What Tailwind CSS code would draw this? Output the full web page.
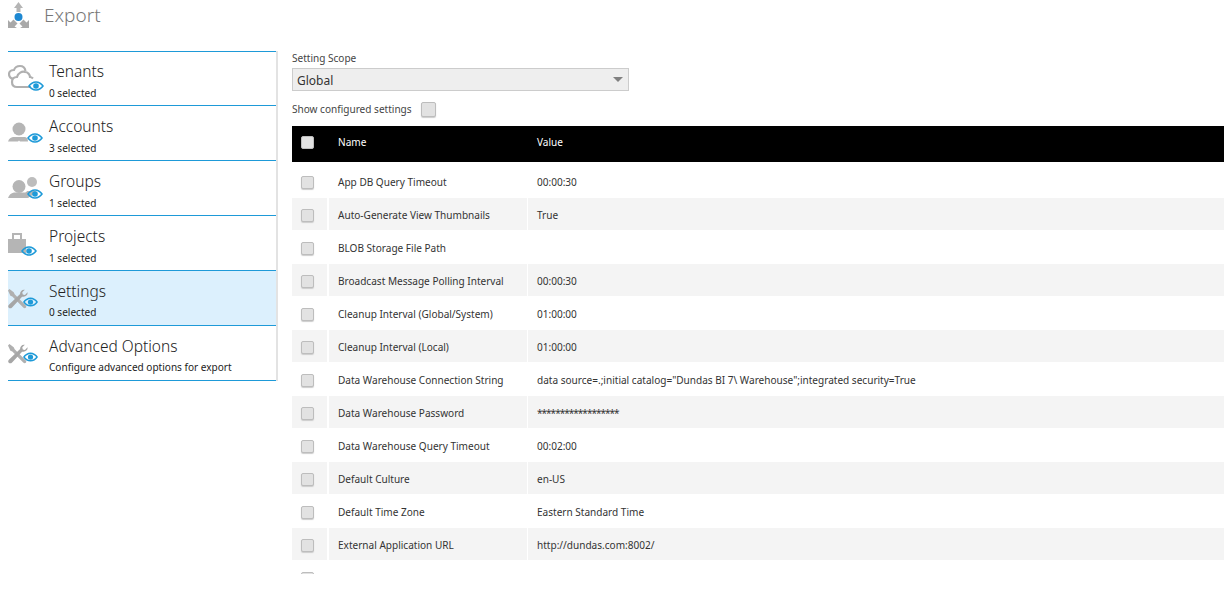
<!DOCTYPE html>
<html lang="en">
<head>
  <meta charset="UTF-8">
  <title>Export</title>
  <script src="https://cdn.jsdelivr.net/npm/@tailwindcss/browser@4"></script>
</head>
<body class="bg-white overflow-hidden font-['Noto_Sans',sans-serif]">
  <svg class="hidden">
    <defs>
      <symbol id="eye" viewBox="0 0 16 10">
        <path fill-rule="evenodd" fill="#1e9ad8" d="M0 5C2 1.800 5 .2 8 .2s6 1.600 8 4.800c-2 3.200-5 4.800-8 4.800S2 8.200 0 5zm2 0c1.500 1.900 3.600 3.300 6 3.300s4.500-1.400 6-3.300c-1.500-1.900-3.600-3.300-6-3.300S3.500 3.100 2 5z"/>
        <circle cx="8" cy="5" r="2.800" fill="#1e9ad8"/>
      </symbol>
      <symbol id="tools" viewBox="0 0 21 21">
        <path fill="#b0b0b0" d="M0 1.500 1.500 0 6 3.500l1 2 11.500 11.500c.9.900.9 2 .2 2.700-.7.700-1.800.7-2.700-.2L4.500 8l-2-1z"/>
        <path fill="#a6a6a6" d="M20.500 3.500 17.800 6.200 15.500 5.800 15 3.500 17.700.8c-2.800-.6-5.200 1.500-5 4.500L1.200 16.200c-1.300 1.200-1.300 2.600-.4 3.500.9.900 2.400.9 3.500-.3L14.800 8.200c3 .2 6.200-1.600 5.700-4.700z"/>
      </symbol>
    </defs>
  </svg>

  <div class="flex items-center h-[32px] pl-2">
    <svg class="w-[21px] h-[28px] mt-[-2px]" viewBox="0 0 21 28">
      <path fill="#b5b5b5" d="M10.500 1 15 7h-2.500v4h-4V7H6z"/>
      <path fill="#a9a9a9" d="M0 27V19l2.500 2.500 3-3 4 4-3 3L9 27z"/>
      <path fill="#a9a9a9" d="M21 27V19l-2.500 2.500-3-3-4 4 3 3L12 27z"/>
      <circle cx="10.500" cy="16" r="4" fill="#1e88d2"/>
    </svg>
    <span class="ml-[15px] mt-[-2px] text-[19px] font-light text-[#777777] leading-none">Export</span>
  </div>

  <div class="flex mt-[19px]">
    <div class="w-[270px] ml-2 border-r-2 border-[#e3e3e3] self-start text-[#222222]">
      <div class="h-[54px] border-t border-[#1e9ad8] flex">
        <svg class="w-[37px] h-[30px] mt-[12px] shrink-0" viewBox="0 0 37 30">
          <path fill="none" stroke="#b0b0b0" stroke-width="2.200" d="M5 15C2 14 1 12 1 10 1 7 4 6 6 6 7 3 10 2 12 2c3 0 5 2 5.500 5"/>
          <path fill="none" stroke="#b0b0b0" stroke-width="2.200" d="M23 23H9c-4 0-5-3-5-5 0-3 2-5 5-5 1-4 5-6 8-5 3 0 5 3 5 5 1 0 2 .5 3 1.500"/>
          <use href="#eye" x="20" y="17" width="16" height="10"/>
        </svg>
        <div class="ml-[4px]">
          <div class="text-[15.500px] font-light leading-[20px] mt-[9px]">Tenants</div>
          <div class="text-[10.050px] leading-[14px] mt-[5px]">0 selected</div>
        </div>
      </div>
      <div class="h-[55px] border-t border-[#1e9ad8] flex">
        <svg class="w-[37px] h-[30px] mt-[13px] shrink-0" viewBox="0 0 37 30">
          <circle cx="11" cy="10" r="6.500" fill="#b5b5b5"/>
          <path fill="#b5b5b5" d="M0 22.500c1-3 3-4 5-4.500h12c2 .5 3 2 3 4.500h-8l-1-1-1 1z"/>
          <use href="#eye" x="19" y="14" width="16" height="10"/>
        </svg>
        <div class="ml-[4px]">
          <div class="text-[15.500px] font-light leading-[20px] mt-[10px]">Accounts</div>
          <div class="text-[10.050px] leading-[14px] mt-[5px]">3 selected</div>
        </div>
      </div>
      <div class="h-[55px] border-t border-[#1e9ad8] flex">
        <svg class="w-[37px] h-[30px] mt-[13px] shrink-0" viewBox="0 0 37 30">
          <circle cx="24" cy="8" r="5" fill="#bdbdbd"/>
          <circle cx="11" cy="12.500" r="6.500" fill="#b5b5b5"/>
          <path fill="#b5b5b5" d="M0 24c1-3 3-5 6-5.500h10c1.500 0 2.500-.5 3-1.500h8l2 1-9 6z"/>
          <use href="#eye" x="19" y="15" width="16" height="10"/>
        </svg>
        <div class="ml-[4px]">
          <div class="text-[15.500px] font-light leading-[20px] mt-[10px]">Groups</div>
          <div class="text-[10.050px] leading-[14px] mt-[5px]">1 selected</div>
        </div>
      </div>
      <div class="h-[55px] border-t border-[#1e9ad8] flex">
        <svg class="w-[37px] h-[30px] mt-[13px] shrink-0" viewBox="0 0 37 30">
          <path fill="#b5b5b5" fill-rule="evenodd" d="M0 10h4V4h10v6h4v14H0zM6 6v4h6V6z"/>
          <use href="#eye" x="13" y="17" width="16" height="10"/>
        </svg>
        <div class="ml-[4px]">
          <div class="text-[15.500px] font-light leading-[20px] mt-[10px]">Projects</div>
          <div class="text-[10.050px] leading-[14px] mt-[5px]">1 selected</div>
        </div>
      </div>
      <div class="h-[55px] border-t border-[#1e9ad8] flex bg-[#dcf0fd]">
        <svg class="w-[37px] h-[30px] mt-[13px] shrink-0" viewBox="0 0 37 30">
          <use href="#tools" x="0" y="5" width="20" height="20"/>
          <use href="#eye" x="15" y="13" width="15" height="10"/>
        </svg>
        <div class="ml-[4px]">
          <div class="text-[15.500px] font-light leading-[20px] mt-[10px]">Settings</div>
          <div class="text-[10.050px] leading-[14px] mt-[4px]">0 selected</div>
        </div>
      </div>
      <div class="h-[56px] border-y border-[#1e9ad8] flex">
        <svg class="w-[37px] h-[30px] mt-[13px] shrink-0" viewBox="0 0 37 30">
          <use href="#tools" x="0" y="5" width="20" height="20"/>
          <use href="#eye" x="15" y="13" width="15" height="10"/>
        </svg>
        <div class="ml-[4px]">
          <div class="text-[15.500px] font-light leading-[20px] mt-[10px]">Advanced Options</div>
          <div class="text-[10.050px] leading-[14px] mt-[4px]">Configure advanced options for export</div>
        </div>
      </div>
    </div>

    <div class="ml-[14px] flex-1 min-w-0">
      <div class="text-[10.050px] leading-[14px] text-[#444444]">Setting Scope</div>
      <div class="mt-[3px] w-[337px] h-[23px] bg-[#eeeeee] border border-[#cccccc] flex items-center justify-between pl-[4px] pr-[4px]">
        <span class="text-[12px] pt-[2px] text-[#333333]">Global</span>
        <span class="w-0 h-0 border-x-[5px] border-x-transparent border-t-[5px] border-t-[#808080] mr-[1px]"></span>
      </div>
      <div class="flex items-center mt-[11px] h-[15px]">
        <span class="text-[10.050px] text-[#444444]">Show configured settings</span>
        <span class="ml-[9px] w-[15px] h-[15px] rounded-[2px] bg-[#e2e2e2] border border-[#bdbdbd] shadow-[0_1px_1px_#cccccc]"></span>
      </div>

      <div class="mt-[9px] h-[448px] overflow-hidden text-[10.050px] text-[#333333]">
        <div class="flex h-[36px] pb-[3px] bg-black text-white items-center">
          <div class="w-[37px] pl-[9px]"><div class="w-[13px] h-[13px] rounded-[2px] bg-[#e2e2e2] border border-[#bdbdbd]"></div></div>
          <div class="w-[199px] pl-[9px]">Name</div>
          <div class="pl-[9px]">Value</div>
        </div>
        <div class="h-[3px]"></div>
        <div class="flex h-[33px] border-b border-white">
          <div class="w-[37px] pl-[9px] pt-[2px] flex items-center border-r-2 border-white"><div class="w-[13px] h-[13px] rounded-[2px] bg-[#e2e2e2] border border-[#bdbdbd] shadow-[0_1px_1px_#cccccc]"></div></div>
          <div class="w-[199px] pl-[9px] pt-[4px] flex items-center border-r border-white">App DB Query Timeout</div>
          <div class="pl-[9px] pt-[4px] flex items-center">00:00:30</div>
        </div>
        <div class="flex h-[33px] border-b border-white bg-[#f4f4f4]">
          <div class="w-[37px] pl-[9px] pt-[2px] flex items-center border-r-2 border-white"><div class="w-[13px] h-[13px] rounded-[2px] bg-[#e2e2e2] border border-[#bdbdbd] shadow-[0_1px_1px_#cccccc]"></div></div>
          <div class="w-[199px] pl-[9px] pt-[4px] flex items-center border-r border-white">Auto-Generate View Thumbnails</div>
          <div class="pl-[9px] pt-[4px] flex items-center">True</div>
        </div>
        <div class="flex h-[33px] border-b border-white">
          <div class="w-[37px] pl-[9px] pt-[2px] flex items-center border-r-2 border-white"><div class="w-[13px] h-[13px] rounded-[2px] bg-[#e2e2e2] border border-[#bdbdbd] shadow-[0_1px_1px_#cccccc]"></div></div>
          <div class="w-[199px] pl-[9px] pt-[4px] flex items-center border-r border-white">BLOB Storage File Path</div>
          <div class="pl-[9px] pt-[4px] flex items-center"></div>
        </div>
        <div class="flex h-[33px] border-b border-white bg-[#f4f4f4]">
          <div class="w-[37px] pl-[9px] pt-[2px] flex items-center border-r-2 border-white"><div class="w-[13px] h-[13px] rounded-[2px] bg-[#e2e2e2] border border-[#bdbdbd] shadow-[0_1px_1px_#cccccc]"></div></div>
          <div class="w-[199px] pl-[9px] pt-[4px] flex items-center border-r border-white">Broadcast Message Polling Interval</div>
          <div class="pl-[9px] pt-[4px] flex items-center">00:00:30</div>
        </div>
        <div class="flex h-[33px] border-b border-white">
          <div class="w-[37px] pl-[9px] pt-[2px] flex items-center border-r-2 border-white"><div class="w-[13px] h-[13px] rounded-[2px] bg-[#e2e2e2] border border-[#bdbdbd] shadow-[0_1px_1px_#cccccc]"></div></div>
          <div class="w-[199px] pl-[9px] pt-[4px] flex items-center border-r border-white">Cleanup Interval (Global/System)</div>
          <div class="pl-[9px] pt-[4px] flex items-center">01:00:00</div>
        </div>
        <div class="flex h-[33px] border-b border-white bg-[#f4f4f4]">
          <div class="w-[37px] pl-[9px] pt-[2px] flex items-center border-r-2 border-white"><div class="w-[13px] h-[13px] rounded-[2px] bg-[#e2e2e2] border border-[#bdbdbd] shadow-[0_1px_1px_#cccccc]"></div></div>
          <div class="w-[199px] pl-[9px] pt-[4px] flex items-center border-r border-white">Cleanup Interval (Local)</div>
          <div class="pl-[9px] pt-[4px] flex items-center">01:00:00</div>
        </div>
        <div class="flex h-[33px] border-b border-white">
          <div class="w-[37px] pl-[9px] pt-[2px] flex items-center border-r-2 border-white"><div class="w-[13px] h-[13px] rounded-[2px] bg-[#e2e2e2] border border-[#bdbdbd] shadow-[0_1px_1px_#cccccc]"></div></div>
          <div class="w-[199px] pl-[9px] pt-[4px] flex items-center border-r border-white">Data Warehouse Connection String</div>
          <div class="pl-[9px] pt-[4px] flex items-center">data source=.;initial catalog="Dundas BI 7\ Warehouse";integrated security=True</div>
        </div>
        <div class="flex h-[33px] border-b border-white bg-[#f4f4f4]">
          <div class="w-[37px] pl-[9px] pt-[2px] flex items-center border-r-2 border-white"><div class="w-[13px] h-[13px] rounded-[2px] bg-[#e2e2e2] border border-[#bdbdbd] shadow-[0_1px_1px_#cccccc]"></div></div>
          <div class="w-[199px] pl-[9px] pt-[4px] flex items-center border-r border-white">Data Warehouse Password</div>
          <div class="pl-[9px] pt-[4px] flex items-center tracking-[-1px]">******************</div>
        </div>
        <div class="flex h-[33px] border-b border-white">
          <div class="w-[37px] pl-[9px] pt-[2px] flex items-center border-r-2 border-white"><div class="w-[13px] h-[13px] rounded-[2px] bg-[#e2e2e2] border border-[#bdbdbd] shadow-[0_1px_1px_#cccccc]"></div></div>
          <div class="w-[199px] pl-[9px] pt-[4px] flex items-center border-r border-white">Data Warehouse Query Timeout</div>
          <div class="pl-[9px] pt-[4px] flex items-center">00:02:00</div>
        </div>
        <div class="flex h-[33px] border-b border-white bg-[#f4f4f4]">
          <div class="w-[37px] pl-[9px] pt-[2px] flex items-center border-r-2 border-white"><div class="w-[13px] h-[13px] rounded-[2px] bg-[#e2e2e2] border border-[#bdbdbd] shadow-[0_1px_1px_#cccccc]"></div></div>
          <div class="w-[199px] pl-[9px] pt-[4px] flex items-center border-r border-white">Default Culture</div>
          <div class="pl-[9px] pt-[4px] flex items-center">en-US</div>
        </div>
        <div class="flex h-[33px] border-b border-white">
          <div class="w-[37px] pl-[9px] pt-[2px] flex items-center border-r-2 border-white"><div class="w-[13px] h-[13px] rounded-[2px] bg-[#e2e2e2] border border-[#bdbdbd] shadow-[0_1px_1px_#cccccc]"></div></div>
          <div class="w-[199px] pl-[9px] pt-[4px] flex items-center border-r border-white">Default Time Zone</div>
          <div class="pl-[9px] pt-[4px] flex items-center">Eastern Standard Time</div>
        </div>
        <div class="flex h-[33px] border-b border-white bg-[#f4f4f4]">
          <div class="w-[37px] pl-[9px] pt-[2px] flex items-center border-r-2 border-white"><div class="w-[13px] h-[13px] rounded-[2px] bg-[#e2e2e2] border border-[#bdbdbd] shadow-[0_1px_1px_#cccccc]"></div></div>
          <div class="w-[199px] pl-[9px] pt-[4px] flex items-center border-r border-white">External Application URL</div>
          <div class="pl-[9px] pt-[4px] flex items-center">http://dundas.com:8002/</div>
        </div>
        <div class="flex h-[33px]">
          <div class="w-[37px] pl-[9px] pt-[2px] flex items-center"><div class="w-[13px] h-[13px] rounded-[2px] bg-[#e2e2e2] border border-[#bdbdbd]"></div></div>
        </div>
      </div>
    </div>
  </div>
</body>
</html>
